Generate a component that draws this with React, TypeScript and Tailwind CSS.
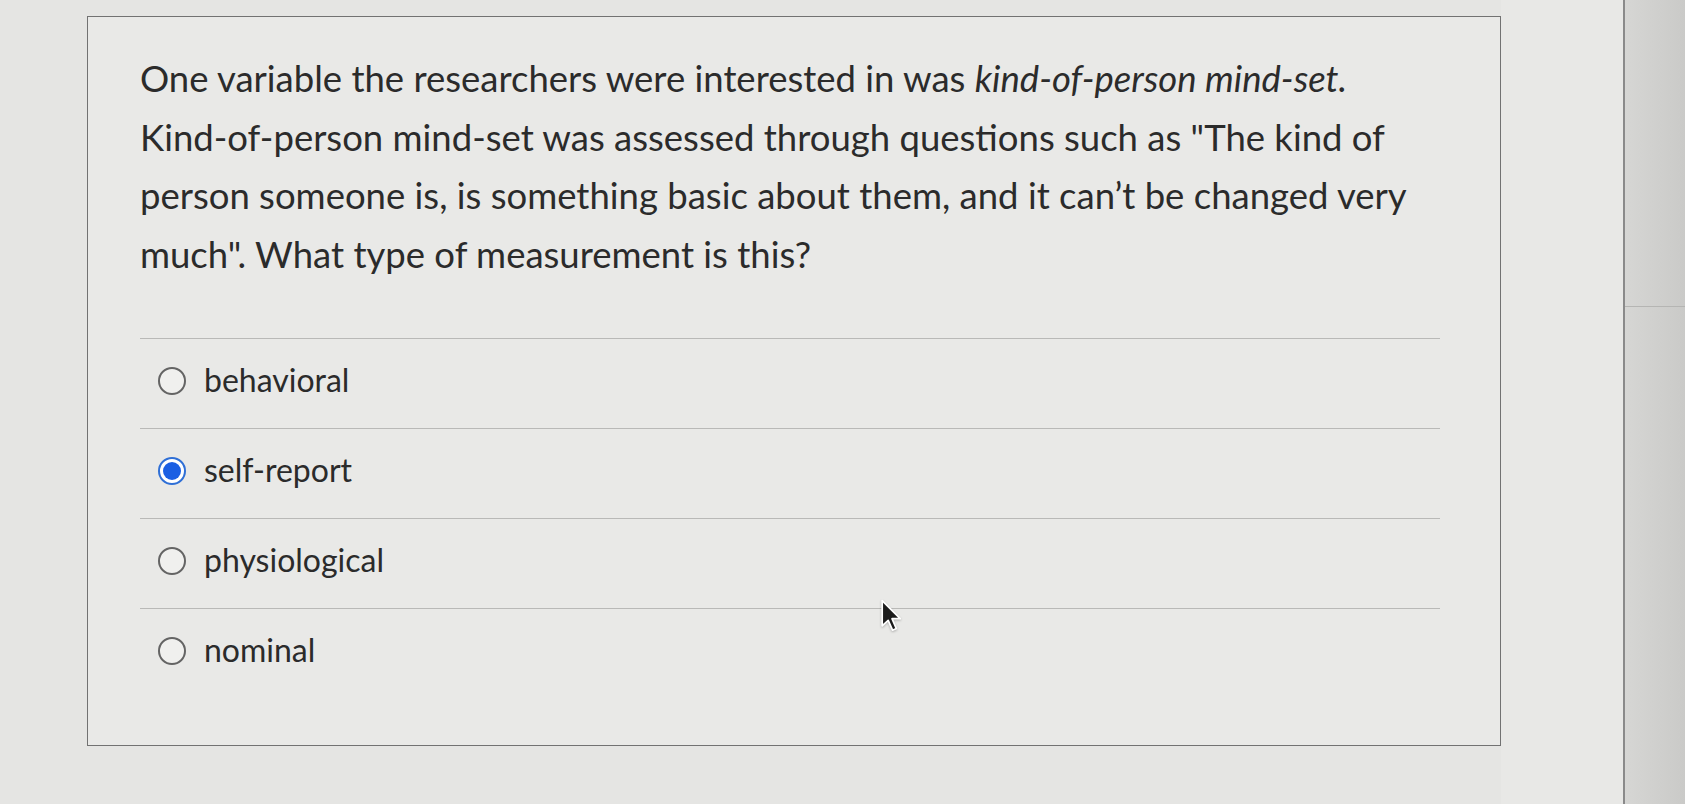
import React from "react";

const options = [
  { label: "behavioral", checked: false },
  { label: "self-report", checked: true },
  { label: "physiological", checked: false },
  { label: "nominal", checked: false },
];

function Radio({ checked }: { checked: boolean }) {
  if (checked) {
    return (
      <span className="flex h-[28px] w-[28px] shrink-0 items-center justify-center rounded-full border-[2px] border-[#2f6fd6] bg-white">
        <span className="h-[18px] w-[18px] rounded-full bg-[#1b5fe3]" />
      </span>
    );
  }
  return (
    <span className="h-[28px] w-[28px] shrink-0 rounded-full border-[2px] border-[#646464] bg-[#f0f0ee]" />
  );
}

function Cursor() {
  return (
    <svg
      width="24"
      height="36"
      viewBox="0 0 22 32"
      className="absolute left-[880px] top-[598px] drop-shadow-[0_1px_1px_rgba(0,0,0,0.25)]"
    >
      <path
        d="M2 2 L2 25 L7.5 20 L11.5 29 L15 27.5 L11 18.5 L18.5 18.5 Z"
        fill="#1c1c1c"
        stroke="#ffffff"
        strokeWidth="1.6"
        strokeLinejoin="round"
      />
    </svg>
  );
}

export default function App() {
  return (
    <div
      className="relative flex h-[804px] w-[1685px] overflow-hidden bg-[#e5e5e3] text-[#2b2b2b]"
      style={{ fontFamily: "Lato, 'Open Sans', sans-serif" }}
    >
      {/* left margin */}
      <div className="w-[87px] shrink-0" />

      {/* question card */}
      <div className="mt-[16px] h-[730px] w-[1414px] shrink-0 border-[1.5px] border-[#727272] bg-[#e9e9e7] pl-[52px] pr-[60px] pt-[32px]">
        <p className="whitespace-nowrap text-[36.5px] leading-[58.5px]">
          One variable the researchers were interested in was{" "}
          <em>kind-of-person mind-set.</em>
          <br />
          Kind-of-person mind-set was assessed through questions such as "The kind of
          <br />
          person someone is, is something basic about them, and it can’t be changed very
          <br />
          much". What type of measurement is this?
        </p>

        <div className="mt-[55px]">
          {options.map((o) => (
            <div
              key={o.label}
              className="flex h-[90px] items-start gap-[18px] border-t-[1.5px] border-[#b9b9b7] pl-[18px] pt-[28px]"
            >
              <Radio checked={o.checked} />
              <span className="-mt-[6px] text-[32px] leading-[38px]">{o.label}</span>
            </div>
          ))}
        </div>
      </div>

      {/* space between card and next panel */}
      <div className="w-[122px] shrink-0 bg-[#e8e8e6]" />

      {/* neighbouring panel */}
      <div className="flex-1 border-l-[2px] border-[#8a8a8a] bg-gradient-to-r from-[#d6d6d4] to-[#cacac8]">
        <div className="mt-[306px] border-t-[1px] border-[#b5b5b3]" />
      </div>

      <Cursor />
    </div>
  );
}
